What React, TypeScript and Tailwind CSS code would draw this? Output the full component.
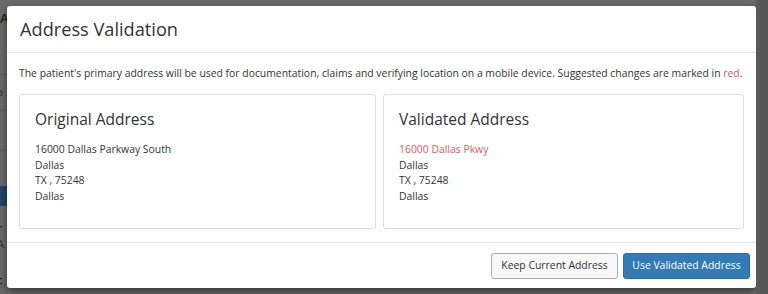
import React from "react";

export default function App() {
  const font = { fontFamily: '"Open Sans", "Noto Sans", sans-serif' };
  return (
    <div className="w-[768px] h-[294px] overflow-hidden bg-[#6a6a6a] flex" style={font}>
      {/* dimmed page strip on the left */}
      <div className="w-[7px] shrink-0 flex flex-col overflow-hidden">
        <div className="h-[74px] pt-[10px] text-[13px] leading-[16px] text-[#222] font-semibold">A</div>
        <div className="h-px bg-[#5a5a5a]" />
        <div className="h-[35px] flex items-center text-[11px] text-[#333] -ml-[3px]">a</div>
        <div className="h-px bg-[#5a5a5a]" />
        <div className="h-[39px]" />
        <div className="h-px bg-[#5a5a5a]" />
        <div className="h-[35px]" />
        <div className="h-[20px] bg-[#1f4766]" />
        <div className="h-[14px]" />
        <div className="text-[11px] leading-[16px] text-[#222] font-semibold -ml-[3px]">r</div>
        <div className="text-[11px] leading-[16px] text-[#333] -ml-[3px]">A</div>
        <div className="h-[20px]" />
        <div className="text-[11px] leading-[16px] text-[#222] font-semibold -ml-[3px]">c</div>
      </div>

      {/* modal */}
      <div className="w-[749px] shrink-0 mt-[6px] self-start bg-white rounded-[3px] shadow-[0_3px_9px_rgba(0,0,0,0.5)]">
        <div className="h-[47px] px-[13px] flex items-center border-b border-[#e5e5e5]">
          <h4 className="text-[18.2px] leading-none text-[#333] font-normal">Address Validation</h4>
        </div>
        <div className="px-[12px] pt-[12px] pb-[13px]">
          <p className="text-[10.4px] leading-[17px] text-[#333] mb-[12px] whitespace-nowrap">
            The patient's primary address will be used for documentation, claims and verifying location on a mobile device. Suggested changes are marked in{" "}
            <span className="text-[#d9534f]">red</span>.
          </p>
          <div className="grid grid-cols-[357px_1fr] gap-[7px]">
            <div className="h-[135px] border border-[#ddd] rounded-[3px] px-[15px] pt-[13px]">
              <div className="text-[15.5px] leading-[22px] text-[#333] mb-[12px]">Original Address</div>
              <div className="text-[10.4px] leading-[15.5px] text-[#333]">
                <div>16000 Dallas Parkway South</div>
                <div>Dallas</div>
                <div>TX , 75248</div>
                <div>Dallas</div>
              </div>
            </div>
            <div className="h-[135px] border border-[#ddd] rounded-[3px] px-[15px] pt-[13px]">
              <div className="text-[15.5px] leading-[22px] text-[#333] mb-[12px]">Validated Address</div>
              <div className="text-[10.4px] leading-[15.5px] text-[#333]">
                <div className="text-[#dd5a62]">16000 Dallas Pkwy</div>
                <div>Dallas</div>
                <div>TX , 75248</div>
                <div>Dallas</div>
              </div>
            </div>
          </div>
        </div>
        <div className="border-t border-[#e5e5e5] flex justify-end gap-[5px] pt-[10px] pb-[9px] pr-[6px]">
          <button className="h-[26px] w-[127px] border border-[#adadad] rounded-[3px] bg-[#f7f7f7] text-[10.4px] text-[#333]">
            Keep Current Address
          </button>
          <button className="h-[26px] w-[127px] border border-[#2e6da4] rounded-[3px] bg-[#337ab7] text-[10.4px] text-white">
            Use Validated Address
          </button>
        </div>
      </div>

      <div className="flex-1 bg-[#585858]" />
    </div>
  );
}
